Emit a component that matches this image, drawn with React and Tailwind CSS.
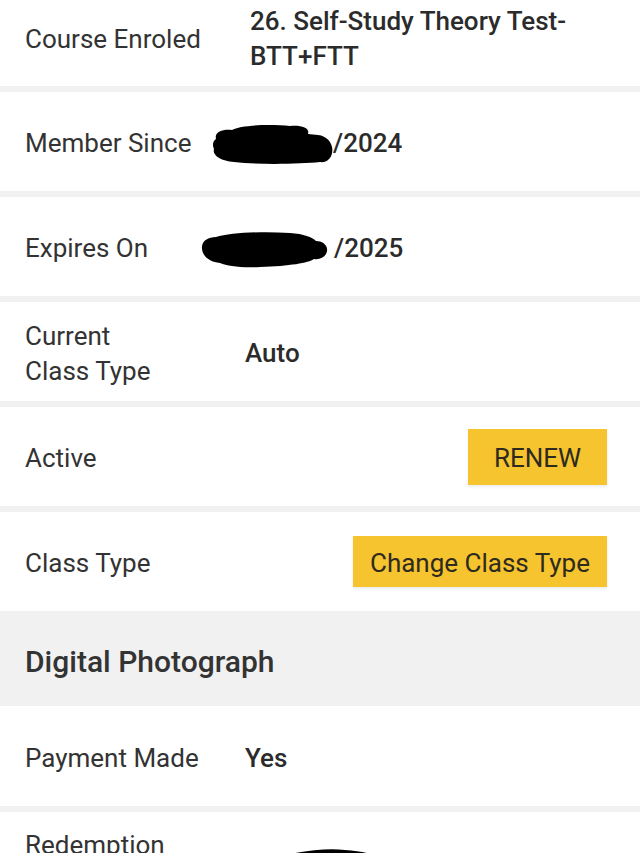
import React from "react";

function BlobA() {
  return (
    <svg width="126" height="42" viewBox="0 0 126 42" className="block shrink-0">
      <path
        d="M6 16 C4 8 14 6 22 7 C30 2 60 1 80 3 C92 2 100 5 98 11 L108 12 C118 13 124 22 122 30 C121 36 116 40 110 39 C90 41 50 42 24 39 C10 38 2 32 4 26 C2 22 3 18 6 16 Z"
        fill="#000"
      />
    </svg>
  );
}

function BlobB() {
  return (
    <svg width="128" height="40" viewBox="0 0 128 40" className="block shrink-0">
      <path
        d="M2 20 C1 12 8 8 16 8 C30 4 60 2 90 4 C104 5 112 8 116 12 C122 12 128 16 127 22 C126 28 120 31 114 30 C108 34 90 37 60 38 C40 39 28 37 20 34 C10 33 3 28 2 20 Z"
        fill="#000"
      />
    </svg>
  );
}

function BlobC() {
  return (
    <svg width="80" height="20" viewBox="0 0 80 20" className="block shrink-0">
      <path d="M0 6 C20 2 40 0 55 2 C65 3 75 4 80 6 L80 20 L0 20 Z" fill="#000" />
    </svg>
  );
}

function Row({ children, className = "" }) {
  return (
    <div className={"bg-white flex items-center px-[25px] " + className}>{children}</div>
  );
}

export default function App() {
  return (
    <div className="w-[640px] h-[853px] overflow-hidden bg-[#f1f1f1] font-['Roboto',sans-serif] text-[26px] leading-[35px] text-[#333]">
      <div className="flex flex-col gap-[6px]">
        <Row className="h-[86px] pb-[8px]">
          <div className="w-[225px] shrink-0">Course Enroled</div>
          <div className="font-medium text-[#2b2b2b]">
            26. Self-Study Theory Test-
            <br />
            BTT+FTT
          </div>
        </Row>
        <Row className="h-[99px] pt-[4px]">
          <div className="w-[185px] shrink-0">Member Since</div>
          <BlobA />
          <div className="-ml-[3px] font-medium text-[#2b2b2b]">/2024</div>
        </Row>
        <Row className="h-[99px] pt-[4px]">
          <div className="w-[175px] shrink-0">Expires On</div>
          <BlobB />
          <div className="ml-[6px] font-medium text-[#2b2b2b]">/2025</div>
        </Row>
        <Row className="h-[99px] pt-[4px]">
          <div className="w-[220px] shrink-0">
            Current
            <br />
            Class Type
          </div>
          <div className="font-medium text-[#2b2b2b]">Auto</div>
        </Row>
        <Row className="h-[99px] justify-between pr-[33px] pt-[4px]">
          <div>Active</div>
          <button className="-mt-[4px] h-[56px] w-[139px] pt-[3px] bg-[#f5c42f] text-[#2e2a20] text-[26px] shadow-[0_2px_3px_rgba(0,0,0,0.08)]">
            RENEW
          </button>
        </Row>
        <Row className="h-[99px] justify-between pr-[33px] pt-[4px]">
          <div>Class Type</div>
          <button className="-mt-[4px] h-[51px] px-[17px] pt-[3px] bg-[#f5c42f] text-[#2e2a20] text-[26px] shadow-[0_2px_3px_rgba(0,0,0,0.08)]">
            Change Class Type
          </button>
        </Row>
        <div className="h-[89px] flex items-center px-[25px]">
          <div className="text-[30px] font-medium text-[#333]">Digital Photograph</div>
        </div>
      </div>
      <div className="flex flex-col gap-[6px]">
        <Row className="h-[100px] pt-[4px]">
          <div className="w-[220px] shrink-0">Payment Made</div>
          <div className="font-medium text-[#2b2b2b]">Yes</div>
        </Row>
        <Row className="h-[100px] items-start pt-[16px]">
          <div className="w-[265px] shrink-0">
            Redemption
            <br />
            Date
          </div>
          <div className="flex items-start mt-[20px]">
            <BlobC />
            <div className="font-medium text-[#2b2b2b] -mt-[2px]">3:56:36 PM</div>
          </div>
        </Row>
      </div>
    </div>
  );
}
